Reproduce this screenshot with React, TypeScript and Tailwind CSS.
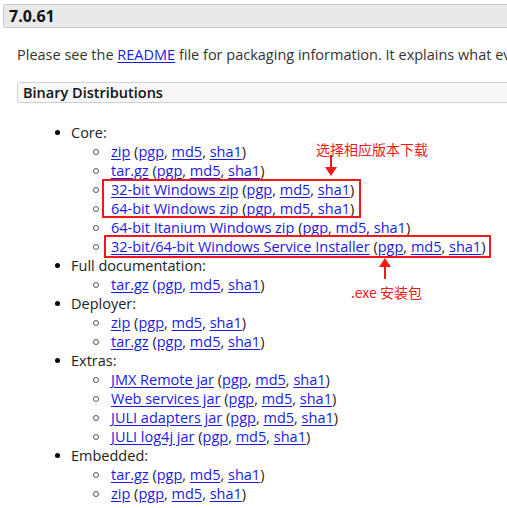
const groups = [
  {
    label: 'Core:',
    items: [
      'zip',
      'tar.gz',
      '32-bit Windows zip',
      '64-bit Windows zip',
      '64-bit Itanium Windows zip',
      '32-bit/64-bit Windows Service Installer',
    ],
  },
  { label: 'Full documentation:', items: ['tar.gz'] },
  { label: 'Deployer:', items: ['zip', 'tar.gz'] },
  {
    label: 'Extras:',
    items: ['JMX Remote jar', 'Web services jar', 'JULI adapters jar', 'JULI log4j jar'],
  },
  { label: 'Embedded:', items: ['tar.gz', 'zip'] },
];

function A({ children }: { children: React.ReactNode }) {
  return <a href="#" className="text-[#1a1ae6] underline underline-offset-[2px]">{children}</a>;
}

function DownloadItem({ name }: { name: string }) {
  return (
    <div className="flex h-[19px] items-center pl-[93px]">
      <span className="h-[6px] w-[6px] rounded-full border border-[#555]" />
      <span className="ml-[12px] whitespace-nowrap">
        <A>{name}</A> (<A>pgp</A>, <A>md5</A>, <A>sha1</A>)
      </span>
    </div>
  );
}

export default function App() {
  return (
    <div
      className="relative h-[508px] w-[507px] overflow-hidden bg-white text-[14.5px] text-[#222]"
      style={{ fontFamily: '"Open Sans", "Noto Sans", sans-serif' }}
    >
      <div className="ml-[3px] mt-[4px] flex h-[24px] w-[600px] items-center rounded-[3px] border border-[#c9c9c9] bg-[#e9e9e9] pl-[5px] text-[16px] font-bold text-[#111]">
        7.0.61
      </div>

      <p className="mt-[17px] whitespace-nowrap pl-[17px] leading-[19px] text-[#333]">
        Please see the <A>README</A> file for packaging information. It explains what every distribution contains.
      </p>

      <div className="ml-[17px] mt-[18px] flex h-[21px] w-[600px] items-center rounded-[3px] border border-[#cfcfcf] bg-[#f7f7f7] pl-[5px] text-[14.5px] font-semibold text-[#111]">
        Binary Distributions
      </div>

      <div className="mt-[20px]">
        {groups.map((g) => (
          <div key={g.label}>
            <div className="flex h-[19px] items-center pl-[55px]">
              <span className="h-[5px] w-[5px] rounded-full bg-black" />
              <span className="ml-[11px]">{g.label}</span>
            </div>
            {g.items.map((it, i) => (
              <DownloadItem key={g.label + i} name={it} />
            ))}
          </div>
        ))}
      </div>

      {/* annotations */}
      <div className="absolute left-[102px] top-[179px] h-[39px] w-[259px] border-2 border-[#f01818]" />
      <div className="absolute left-[104px] top-[235px] h-[23px] w-[387px] border-2 border-[#f01818]" />

      <div
        className="absolute left-[316px] top-[140px] whitespace-nowrap text-[14px] leading-[18px] text-[#f01818]"
        style={{ fontFamily: '"Noto Sans CJK SC", sans-serif' }}
      >
        选择相应版本下载
      </div>
      <svg className="absolute left-[325px] top-[155px]" width="12" height="22" viewBox="0 0 12 22">
        <line x1="6" y1="0" x2="6" y2="14" stroke="#f01818" strokeWidth="2" />
        <polygon points="0,12 12,12 6,21" fill="#f01818" />
      </svg>

      <svg className="absolute left-[379px] top-[258px]" width="12" height="22" viewBox="0 0 12 22">
        <polygon points="6,0 0,9 12,9" fill="#f01818" />
        <line x1="6" y1="8" x2="6" y2="21" stroke="#f01818" strokeWidth="2" />
      </svg>
      <div
        className="absolute left-[351px] top-[283px] whitespace-nowrap text-[14px] leading-[18px] text-[#f01818]"
        style={{ fontFamily: '"Noto Sans CJK SC", sans-serif' }}
      >
        .exe 安装包
      </div>
    </div>
  );
}
